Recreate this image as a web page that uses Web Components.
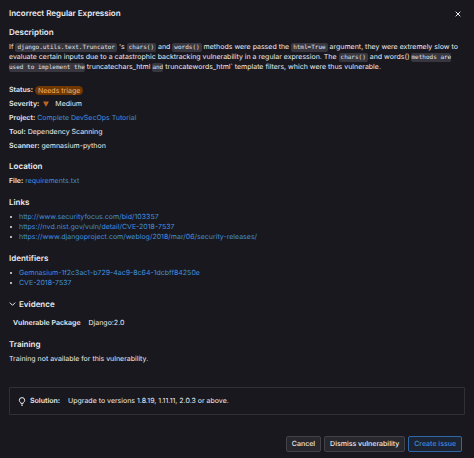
<!DOCTYPE html>
<html lang="en">
<head>
<meta charset="utf-8">
<title>Incorrect Regular Expression</title>
<style>
body { margin: 0; background: #19181f; color: #ececef; font: 7px/10px Inter, "Liberation Sans", sans-serif; text-rendering: geometricPrecision; }
</style>
</head>
<body>
<vulnerability-modal></vulnerability-modal>
<script>
const define = (name, html) => {
  const template = document.createElement('template');
  template.innerHTML = html;
  customElements.define(name, class extends HTMLElement {
    constructor() {
      super();
      this.attachShadow({ mode: 'open' }).append(template.content.cloneNode(true));
    }
  });
};

define('modal-section', `
<style>
  :host { display: block; }
  h3 { margin: 0 0 4px; font-size: 8px; line-height: 12px; font-weight: 600; }
  :host([tight]) h3 { margin-bottom: 2px; }
</style>
<h3><slot name="heading"></slot></h3>
<slot></slot>`);

define('code-chip', `
<style>
  :host { display: inline; }
  code { font: 500 6px/8px "DejaVu Sans Mono", monospace; background: #38373f; border-radius: 2px; padding: 1px 2px; color: #e4e3e8; box-decoration-break: clone; -webkit-box-decoration-break: clone; }
  :host([flush]) code { padding: 1px 0; }
</style><code><slot></slot></code>`);

define('detail-row', `
<style>
  :host { display: flex; align-items: center; gap: 2px; line-height: 14px; }
  b { font-weight: 600; }
</style>
<b><slot name="label"></slot></b>
<slot></slot>`);

define('status-badge', `
<style>
  :host { display: block; background: #703800; color: #f0b070; border-radius: 5px; padding: 0 3px; line-height: 9px; }
</style><slot></slot>`);

define('severity-badge', `
<style>
  :host { display: flex; align-items: center; gap: 6px; padding-left: 2px; }
  svg { width: 6px; height: 6px; }
</style>
<svg viewBox="0 0 6 6" aria-hidden="true"><path d="M.7 .5h4.6q.7 0 .4.6L3.4 5.2q-.4.6-.8 0L.3 1.1Q0 .5.7.5Z" fill="#bd6520"/></svg>
<slot></slot>`);

define('text-link', `
<style>
  :host { display: inline; }
  a { color: #428fdc; text-decoration: none; }
</style><a href="#"><slot></slot></a>`);

define('link-list', `
<style>
  :host { display: block; }
  ul { list-style: none; margin: 0; padding: 0; }
</style><ul><slot></slot></ul>`);

define('link-item', `
<style>
  :host { display: block; }
  li { display: flex; align-items: center; gap: 7px; }
  li::before { content: ""; width: 2px; height: 2px; margin-left: 1px; border-radius: 50%; background: #ececef; }
</style><li><text-link><slot></slot></text-link></li>`);

define('solution-card', `
<style>
  :host { display: flex; align-items: center; border: 1px solid #313036; border-radius: 1px; padding: 8px; }
  svg { width: 8px; height: 9px; margin-right: 4px; }
  b { font-weight: 600; margin-right: 8px; }
</style>
<svg viewBox="0 0 8 9" fill="none" stroke="#ececef" aria-hidden="true"><path d="M2.9 6.4V5.7C1.9 5.1 1.3 4.4 1.3 3.3a2.7 2.7 0 0 1 5.4 0c0 1.1-.6 1.8-1.6 2.4v.7ZM3 8.1h2"/></svg>
<b><slot name="label"></slot></b><slot></slot>`);

define('action-button', `
<style>
  :host { display: block; }
  button { display: block; font: inherit; font-weight: 500; line-height: 10px; text-rendering: inherit; color: #ececef; background: #28272d; border: 1px solid #434248; border-radius: 2px; padding: 2px 5px; cursor: pointer; }
  :host([variant=confirm]) button { color: #428fdc; border-color: #2f68a8; background: #1c2431; }
</style><button type="button"><slot></slot></button>`);

define('vulnerability-modal', `
<style>
  :host { display: block; padding: 7px 9px; }
  header { display: flex; justify-content: space-between; padding-right: 4px; margin-bottom: 7px; }
  h2 { margin: 0; font-size: 8px; line-height: 12px; font-weight: 600; }
  header button { display: flex; align-items: flex-end; justify-content: center; width: 7px; height: 10px; padding: 0; border: 0; background: none; color: inherit; cursor: pointer; }
  header svg { width: 6px; height: 6px; }
  p { margin: 0; }
  .details { margin: 11px 0 7px; }
  .location { margin-bottom: 8px; }
  .links { margin-bottom: 10px; }
  .identifiers { margin-bottom: 10px; }
  details { margin-bottom: 10px; }
  summary { display: flex; align-items: center; gap: 3px; font-size: 8px; line-height: 12px; font-weight: 600; margin-bottom: 8px; cursor: pointer; }
  summary svg { width: 7px; height: 6px; }
  .evidence { display: flex; gap: 8px; padding-left: 4px; }
  .evidence b { font-weight: 600; }
  solution-card { margin: 23px 0 21px; }
  footer { display: flex; justify-content: flex-end; gap: 3px; padding-right: 3px; }
</style>
<header>
  <h2>Incorrect Regular Expression</h2>
  <button type="button" aria-label="Close"><svg viewBox="0 0 6 6" stroke="#ececef" aria-hidden="true"><path d="M.7.7l4.6 4.6M5.3.7L.7 5.3"/></svg></button>
</header>
<modal-section><span slot="heading">Description</span>
  <p>If <code-chip>django.utils.text.Truncator</code-chip> 's <code-chip>chars()</code-chip> and <code-chip>words()</code-chip> methods were passed the <code-chip>html=True</code-chip> <span>argument, they were extremely slow to</span> <span>evaluate certain inputs due to a catastrophic backtracking vulnerability in a regular expression. The</span> <code-chip>chars()</code-chip> and words() <code-chip flush>methods are</code-chip> <code-chip flush>used to implement the</code-chip> truncatechars_html <code-chip flush>and</code-chip> truncatewords_html\` template filters, which were thus vulnerable.</p>
</modal-section>
<div class="details">
  <detail-row><span slot="label">Status:</span><status-badge>Needs triage</status-badge></detail-row>
  <detail-row><span slot="label">Severity:</span><severity-badge>Medium</severity-badge></detail-row>
  <detail-row><span slot="label">Project:</span><text-link>Complete DevSecOps Tutorial</text-link></detail-row>
  <detail-row><span slot="label">Tool:</span><span>Dependency Scanning</span></detail-row>
  <detail-row><span slot="label">Scanner:</span><span>gemnasium-python</span></detail-row>
</div>
<modal-section class="location" tight><span slot="heading">Location</span>
  <detail-row><span slot="label">File:</span><text-link>requirements.txt</text-link></detail-row>
</modal-section>
<modal-section class="links"><span slot="heading">Links</span>
  <link-list>
    <link-item>http://www.securityfocus.com/bid/103357</link-item>
    <link-item>https://nvd.nist.gov/vuln/detail/CVE-2018-7537</link-item>
    <link-item>https://www.djangoproject.com/weblog/2018/mar/06/security-releases/</link-item>
  </link-list>
</modal-section>
<modal-section class="identifiers"><span slot="heading">Identifiers</span>
  <link-list>
    <link-item>Gemnasium-1f2c3ac1-b729-4ac9-8c64-1dcbff84250e</link-item>
    <link-item>CVE-2018-7537</link-item>
  </link-list>
</modal-section>
<details open>
  <summary><svg viewBox="0 0 7 6" fill="none" stroke="#ececef" aria-hidden="true"><path d="M.8 1.6l2.7 2.7 2.7-2.7"/></svg>Evidence</summary>
  <div class="evidence"><b>Vulnerable Package</b><span>Django:2.0</span></div>
</details>
<modal-section><span slot="heading">Training</span>
  <p>Training not available for this vulnerability.</p>
</modal-section>
<solution-card><span slot="label">Solution:</span><span>Upgrade to versions 1.8.19, 1.11.11, 2.0.3 or above.</span></solution-card>
<footer>
  <action-button>Cancel</action-button>
  <action-button>Dismiss vulnerability</action-button>
  <action-button variant="confirm">Create issue</action-button>
</footer>`);
</script>
</body>
</html>
